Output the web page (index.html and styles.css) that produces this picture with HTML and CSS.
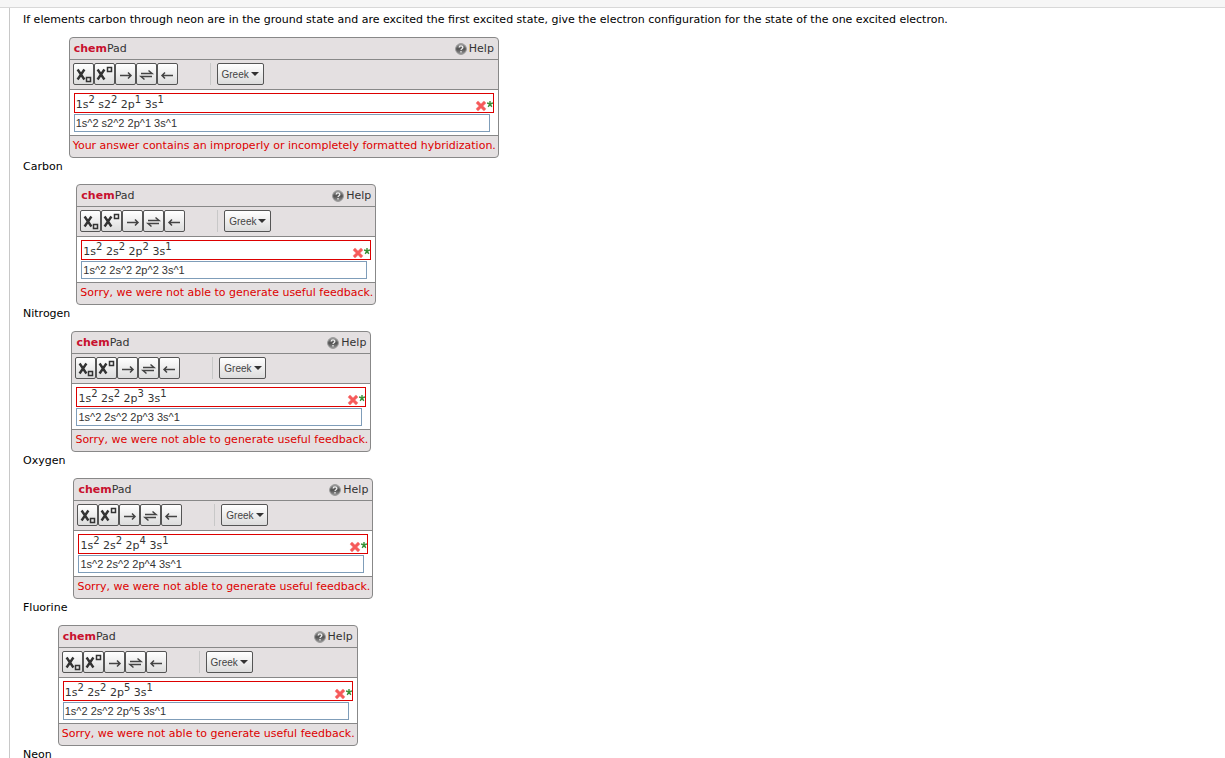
FILE: index.html
```html
<!DOCTYPE html>
<html lang="en">
<head>
<meta charset="utf-8">
<title>Electron configurations</title>
<link rel="stylesheet" href="styles.css">
</head>
<body>
<svg class="defs" aria-hidden="true">
  <defs>
    <linearGradient id="ball" x1="0" y1="0" x2="0" y2="1"><stop offset="0" stop-color="#a4a4a4"/><stop offset=".5" stop-color="#505050"/><stop offset="1" stop-color="#9a9a9a"/></linearGradient>
    <symbol id="i-help" viewBox="0 0 12 12"><circle cx="6" cy="6" r="5.4" fill="url(#ball)" stroke="#999" stroke-width="1"/><path d="M4.2 4.6C4.2 2.4 7.8 2.4 7.8 4.5C7.8 5.7 6 5.7 6 7.1M6 8.1V9.5" fill="none" stroke="#eee" stroke-width="1.3"/></symbol>
    <symbol id="i-sub" viewBox="0 0 19 19"><path d="M3.6 4.5L10.4 14.5M10.4 4.5L3.6 14.5" fill="none" stroke="#333" stroke-width="2.4"/><path d="M12.5 12.5h4v4h-4z" fill="none" stroke="#333" stroke-width="1.5"/></symbol>
    <symbol id="i-sup" viewBox="0 0 19 19"><path d="M2.6 4.5L9.4 14.5M9.4 4.5L2.6 14.5" fill="none" stroke="#333" stroke-width="2.4"/><path d="M12.5 2.5h4v4h-4z" fill="none" stroke="#333" stroke-width="1.5"/></symbol>
    <symbol id="i-right" viewBox="0 0 19 19"><path d="M4 10.5H15M12 7.5L15 10.5L12 13.5" fill="none" stroke="#444" stroke-width="1.5"/></symbol>
    <symbol id="i-left" viewBox="0 0 19 19"><path d="M15 10.5H4M7 7.5L4 10.5L7 13.5" fill="none" stroke="#444" stroke-width="1.5"/></symbol>
    <symbol id="i-eq" viewBox="0 0 19 19"><path d="M4 8.5H15L11.5 5.5M15 11.5H4L7.5 14.5" fill="none" stroke="#444" stroke-width="1.5"/></symbol>
    <symbol id="i-wrong" viewBox="0 0 12 12"><path d="M2 2L10 10M10 2L2 10" fill="none" stroke="#fab0b0" stroke-width="3.8"/><path d="M2 2L10 10M10 2L2 10" fill="none" stroke="#f65a5a" stroke-width="2.6"/></symbol>
    <symbol id="i-star" viewBox="0 0 6 12"><path d="M3 1V4L0 3M3 4L6 3M3 4L1.2 6.8M3 4L4.8 6.8" fill="none" stroke="#389038" stroke-width="1.4"/></symbol>
  </defs>
</svg>
<div class="topbar"></div>
<main class="question">
  <p class="prompt">If elements carbon through neon are in the ground state and are excited the first excited state, give the electron configuration for the state of the one excited electron.</p>

  <div class="row">
    <label class="element" for="carbon">Carbon</label>
    <section class="pad">
      <header class="pad-head"><span><b class="brand">chem</b>Pad</span><a class="help" href="#"><svg class="help-icon"><use href="#i-help"/></svg>Help</a></header>
      <div class="tools">
        <div class="group"><button class="tool" aria-label="Subscript"><svg><use href="#i-sub"/></svg></button><button class="tool" aria-label="Superscript"><svg><use href="#i-sup"/></svg></button><button class="tool" aria-label="Right arrow"><svg><use href="#i-right"/></svg></button><button class="tool" aria-label="Equilibrium"><svg><use href="#i-eq"/></svg></button><button class="tool" aria-label="Left arrow"><svg><use href="#i-left"/></svg></button></div>
        <button class="greek">Greek<span class="caret"></span></button>
      </div>
      <div class="work">
        <div class="math"><span>1s<sup>2</sup> s2<sup>2</sup> 2p<sup>1</sup> 3s<sup>1</sup></span><span class="mark"><svg class="wrong"><use href="#i-wrong"/></svg><svg class="star"><use href="#i-star"/></svg></span></div>
        <input class="entry" id="carbon" type="text" value="1s^2 s2^2 2p^1 3s^1">
      </div>
      <footer class="feedback">Your answer contains an improperly or incompletely formatted hybridization.</footer>
    </section>
  </div>

  <div class="row">
    <label class="element" for="nitrogen">Nitrogen</label>
    <section class="pad">
      <header class="pad-head"><span><b class="brand">chem</b>Pad</span><a class="help" href="#"><svg class="help-icon"><use href="#i-help"/></svg>Help</a></header>
      <div class="tools">
        <div class="group"><button class="tool" aria-label="Subscript"><svg><use href="#i-sub"/></svg></button><button class="tool" aria-label="Superscript"><svg><use href="#i-sup"/></svg></button><button class="tool" aria-label="Right arrow"><svg><use href="#i-right"/></svg></button><button class="tool" aria-label="Equilibrium"><svg><use href="#i-eq"/></svg></button><button class="tool" aria-label="Left arrow"><svg><use href="#i-left"/></svg></button></div>
        <button class="greek">Greek<span class="caret"></span></button>
      </div>
      <div class="work">
        <div class="math"><span>1s<sup>2</sup> 2s<sup>2</sup> 2p<sup>2</sup> 3s<sup>1</sup></span><span class="mark"><svg class="wrong"><use href="#i-wrong"/></svg><svg class="star"><use href="#i-star"/></svg></span></div>
        <input class="entry" id="nitrogen" type="text" value="1s^2 2s^2 2p^2 3s^1">
      </div>
      <footer class="feedback">Sorry, we were not able to generate useful feedback.</footer>
    </section>
  </div>

  <div class="row">
    <label class="element" for="oxygen">Oxygen</label>
    <section class="pad">
      <header class="pad-head"><span><b class="brand">chem</b>Pad</span><a class="help" href="#"><svg class="help-icon"><use href="#i-help"/></svg>Help</a></header>
      <div class="tools">
        <div class="group"><button class="tool" aria-label="Subscript"><svg><use href="#i-sub"/></svg></button><button class="tool" aria-label="Superscript"><svg><use href="#i-sup"/></svg></button><button class="tool" aria-label="Right arrow"><svg><use href="#i-right"/></svg></button><button class="tool" aria-label="Equilibrium"><svg><use href="#i-eq"/></svg></button><button class="tool" aria-label="Left arrow"><svg><use href="#i-left"/></svg></button></div>
        <button class="greek">Greek<span class="caret"></span></button>
      </div>
      <div class="work">
        <div class="math"><span>1s<sup>2</sup> 2s<sup>2</sup> 2p<sup>3</sup> 3s<sup>1</sup></span><span class="mark"><svg class="wrong"><use href="#i-wrong"/></svg><svg class="star"><use href="#i-star"/></svg></span></div>
        <input class="entry" id="oxygen" type="text" value="1s^2 2s^2 2p^3 3s^1">
      </div>
      <footer class="feedback">Sorry, we were not able to generate useful feedback.</footer>
    </section>
  </div>

  <div class="row">
    <label class="element" for="fluorine">Fluorine</label>
    <section class="pad">
      <header class="pad-head"><span><b class="brand">chem</b>Pad</span><a class="help" href="#"><svg class="help-icon"><use href="#i-help"/></svg>Help</a></header>
      <div class="tools">
        <div class="group"><button class="tool" aria-label="Subscript"><svg><use href="#i-sub"/></svg></button><button class="tool" aria-label="Superscript"><svg><use href="#i-sup"/></svg></button><button class="tool" aria-label="Right arrow"><svg><use href="#i-right"/></svg></button><button class="tool" aria-label="Equilibrium"><svg><use href="#i-eq"/></svg></button><button class="tool" aria-label="Left arrow"><svg><use href="#i-left"/></svg></button></div>
        <button class="greek">Greek<span class="caret"></span></button>
      </div>
      <div class="work">
        <div class="math"><span>1s<sup>2</sup> 2s<sup>2</sup> 2p<sup>4</sup> 3s<sup>1</sup></span><span class="mark"><svg class="wrong"><use href="#i-wrong"/></svg><svg class="star"><use href="#i-star"/></svg></span></div>
        <input class="entry" id="fluorine" type="text" value="1s^2 2s^2 2p^4 3s^1">
      </div>
      <footer class="feedback">Sorry, we were not able to generate useful feedback.</footer>
    </section>
  </div>

  <div class="row">
    <label class="element" for="neon">Neon</label>
    <section class="pad">
      <header class="pad-head"><span><b class="brand">chem</b>Pad</span><a class="help" href="#"><svg class="help-icon"><use href="#i-help"/></svg>Help</a></header>
      <div class="tools">
        <div class="group"><button class="tool" aria-label="Subscript"><svg><use href="#i-sub"/></svg></button><button class="tool" aria-label="Superscript"><svg><use href="#i-sup"/></svg></button><button class="tool" aria-label="Right arrow"><svg><use href="#i-right"/></svg></button><button class="tool" aria-label="Equilibrium"><svg><use href="#i-eq"/></svg></button><button class="tool" aria-label="Left arrow"><svg><use href="#i-left"/></svg></button></div>
        <button class="greek">Greek<span class="caret"></span></button>
      </div>
      <div class="work">
        <div class="math"><span>1s<sup>2</sup> 2s<sup>2</sup> 2p<sup>5</sup> 3s<sup>1</sup></span><span class="mark"><svg class="wrong"><use href="#i-wrong"/></svg><svg class="star"><use href="#i-star"/></svg></span></div>
        <input class="entry" id="neon" type="text" value="1s^2 2s^2 2p^5 3s^1">
      </div>
      <footer class="feedback">Sorry, we were not able to generate useful feedback.</footer>
    </section>
  </div>
</main>
</body>
</html>
```
FILE: styles.css
```css
* { box-sizing: border-box; }
body {
  margin: 0;
  background: #fff;
  color: #000;
  font: 11px/14px Verdana, "DejaVu Sans", sans-serif;
}
.defs { position: absolute; width: 0; height: 0; }
.topbar { height: 8px; background: #f6f6f6; border-bottom: 1px solid #d8d8d8; }
.question { margin-left: 9px; padding: 5px 13px 0; border-left: 1px solid #c8c8c8; }
.prompt { margin: 0 0 10px; }
.row { display: flex; align-items: flex-end; gap: 6px; padding-bottom: 10px; }
.row:last-child { padding-bottom: 0; }
.element { flex: none; }
.pad {
  margin-bottom: 16px;
  width: max-content;
  border: 1px solid #888;
  border-radius: 4px;
  background: #e4e0e1;
  color: #333;
  overflow: hidden;
}
.pad-head { display: flex; justify-content: space-between; align-items: center; height: 21px; padding: 0 4px; }
.brand { color: #c8102e; }
.help { display: flex; align-items: center; gap: 2px; color: #333; text-decoration: none; }
.help-icon { width: 12px; height: 12px; }
.tools { display: flex; align-items: flex-start; height: 31px; padding: 3px 3px 0; border-top: 1px solid #888; border-bottom: 1px solid #888; }
.group { display: flex; width: 138px; height: 22px; border-right: 1px solid #c8c8c8; }
.tool, .greek {
  border: 1px solid #555;
  border-radius: 2px;
  padding: 0;
  height: 22px;
  background: linear-gradient(#fff, #dcdcdc);
}
.tool { width: 21px; }
.tool svg { display: block; width: 19px; height: 19px; }
.greek {
  display: flex;
  align-items: center;
  justify-content: center;
  gap: 2px;
  width: 47px;
  margin-left: 6px;
  color: #444;
  font: 10px "Liberation Sans", Arial, sans-serif;
}
.caret { border: 4px solid transparent; border-top-color: #333; border-bottom: 0; }
.work { display: flex; flex-direction: column; gap: 1px; padding: 3px 4px; background: #fff; border-bottom: 1px solid #888; }
.math { display: flex; justify-content: space-between; height: 20px; padding-left: 1px; border: 1px solid #d00; line-height: 22px; }
.math sup { font-size: 10px; line-height: 0; vertical-align: 5px; }
.mark { display: flex; align-items: flex-end; }
.wrong { width: 12px; height: 12px; }
.star { width: 6px; height: 12px; }
.entry { height: 18px; margin-right: 4px; padding: 0 1px; border: 1px solid #7f9db9; background: #fff; color: #333; font: 11px "Liberation Sans", Arial, sans-serif; }
.feedback { padding: 3px 2px 4px 3px; color: #d00; }
```
